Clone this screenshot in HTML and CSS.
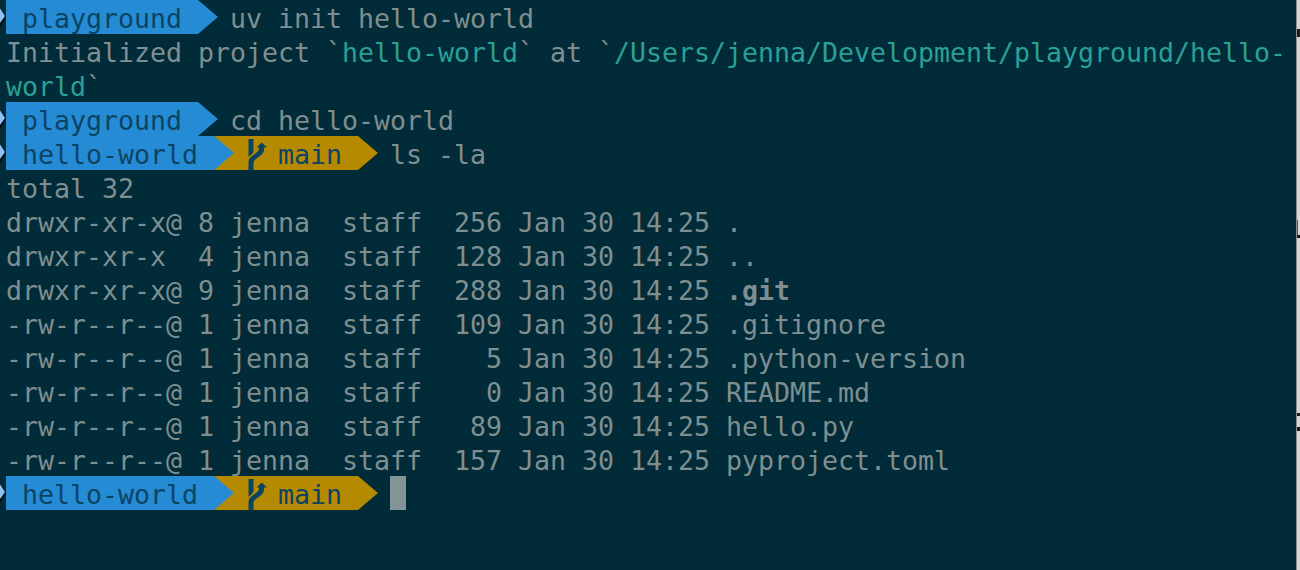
FILE: index.html
```html
<!DOCTYPE html>
<html lang="en">
<head>
<meta charset="utf-8">
<title>Terminal</title>
<link rel="stylesheet" href="styles.css">
</head>
<body>
<svg class="defs" width="0" height="0" aria-hidden="true">
  <symbol id="branch" viewBox="0 0 22 34">
    <path d="M2.5 3H7.5V15C7.5 16.5 6 18 2.5 21Z"/>
    <path d="M2.5 34V26C2.5 22.5 4.5 21 8 18.5C11.5 16 13 15 13 12V11.5H10.5L15.7 6.5L21 11.5H18V13C18 17 15.5 19 12 21.5C9 23.7 7.5 24.5 7.5 27V34Z"/>
  </symbol>
</svg>
<main class="terminal">
  <div class="row">
    <span class="edge"></span>
    <span class="seg seg-blue cols-12">playground</span>
    <span class="cmd">uv init hello-world</span>
  </div>
  <div class="line">Initialized project `<span class="cyan">hello-world</span>` at `<span class="cyan">/Users/jenna/Development/playground/hello-</span></div>
  <div class="line"><span class="cyan">world</span>`</div>
  <div class="row">
    <span class="edge"></span>
    <span class="seg seg-blue cols-12">playground</span>
    <span class="cmd">cd hello-world</span>
  </div>
  <div class="row">
    <span class="edge"></span>
    <span class="seg seg-blue cols-13">hello-world</span>
    <span class="seg seg-yellow cols-9"><svg class="branch"><use href="#branch"/></svg>main</span>
    <span class="cmd">ls -la</span>
  </div>
  <div class="line">total 32</div>
  <div class="line">drwxr-xr-x@ 8 jenna  staff  256 Jan 30 14:25 .</div>
  <div class="line">drwxr-xr-x  4 jenna  staff  128 Jan 30 14:25 ..</div>
  <div class="line">drwxr-xr-x@ 9 jenna  staff  288 Jan 30 14:25 <b>.git</b></div>
  <div class="line">-rw-r--r--@ 1 jenna  staff  109 Jan 30 14:25 .gitignore</div>
  <div class="line">-rw-r--r--@ 1 jenna  staff    5 Jan 30 14:25 .python-version</div>
  <div class="line">-rw-r--r--@ 1 jenna  staff    0 Jan 30 14:25 README.md</div>
  <div class="line">-rw-r--r--@ 1 jenna  staff   89 Jan 30 14:25 hello.py</div>
  <div class="line">-rw-r--r--@ 1 jenna  staff  157 Jan 30 14:25 pyproject.toml</div>
  <div class="row">
    <span class="edge"></span>
    <span class="seg seg-blue cols-13">hello-world</span>
    <span class="seg seg-yellow cols-9"><svg class="branch"><use href="#branch"/></svg>main</span>
    <span class="cursor"></span>
  </div>
</main>
<aside class="strip"></aside>
</body>
</html>
```
FILE: styles.css
```css
* { box-sizing: border-box; }
html, body { margin: 0; height: 100%; }
body {
  display: flex;
  background: #012b38;
  overflow: hidden;
}
.defs { position: absolute; }
.terminal {
  flex: 1;
  font-family: "DejaVu Sans Mono", monospace;
  font-size: 26.58px;
  line-height: 38px;
  color: #7f8f90;
}
.strip {
  width: 4px;
  border-left: 1px solid #8a8f90;
  background:
    linear-gradient(#1c1c1c, #1c1c1c) 0 29px / 3px 8px no-repeat,
    linear-gradient(#555, #555) 0 220px / 1px 15px no-repeat,
    linear-gradient(#1c1c1c, #1c1c1c) 0 235px / 3px 3px no-repeat,
    linear-gradient(#1c1c1c, #1c1c1c) 0 413px / 3px 3px no-repeat,
    linear-gradient(#1c1c1c, #1c1c1c) 0 427px / 3px 4px no-repeat,
    #d6d6d6;
}
.line { height: 34px; padding-left: 6px; white-space: pre; }
.cyan { color: #2aa198; }
.line b { font-weight: 700; }
.row { height: 34px; display: flex; position: relative; white-space: pre; }
.edge {
  position: relative;
  width: 6px;
  height: 34px;
  background: #0b0f14;
  clip-path: polygon(0 8px, 6px 17px, 0 27px);
}
.edge::before {
  content: "";
  position: absolute;
  inset: 0;
  background: #8fc1f4;
  clip-path: polygon(0 8px, 5px 16px, 0 23px);
}
.seg {
  position: relative;
  display: flex;
  align-items: flex-start;
  height: 34px;
  padding-left: 16px;
  color: #0b4462;
}
.seg::after {
  content: "";
  position: absolute;
  left: 100%;
  top: 0;
  width: 20px;
  height: 34px;
  clip-path: polygon(0 0, 100% 50%, 0 100%);
  z-index: 1;
}
.seg-blue { background: #268bd5; }
.seg-blue::after { background: #268bd5; }
.seg-yellow { background: #b58900; padding-left: 64px; }
.seg-yellow::after { background: #b58900; }
.cols-12 { width: 192px; }
.cols-13 { width: 208px; }
.cols-9 { width: 144px; padding-left: 64px; }
.branch {
  position: absolute;
  left: 32px;
  top: 0;
  width: 22px;
  height: 34px;
  fill: #0b4462;
}
.cmd { margin-left: 32px; }
.cursor {
  margin-left: 32px;
  width: 16px;
  height: 34px;
  background: #839496;
}
```
